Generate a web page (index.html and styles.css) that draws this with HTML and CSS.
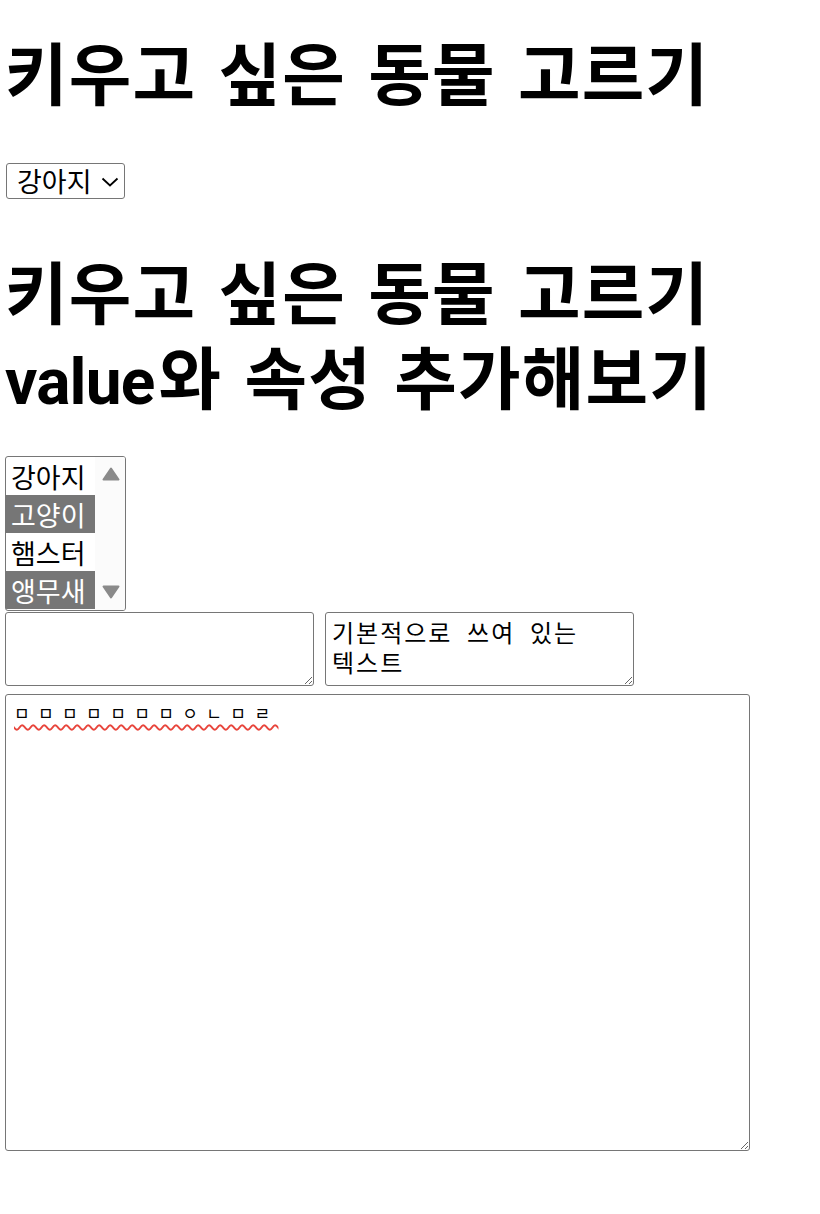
FILE: index.html
```html
<!DOCTYPE html>
<html lang="ko">
<head>
<meta charset="utf-8">
<title>키우고 싶은 동물 고르기</title>
<link rel="stylesheet" href="styles.css">
</head>
<body>
<h1 class="title">키우고 싶은 동물 고르기</h1>
<span class="pickwrap">
  <select class="pick" name="animal">
    <option>강아지</option>
    <option>고양이</option>
    <option>햄스터</option>
    <option>앵무새</option>
  </select>
  <svg class="chev" width="18" height="10" viewBox="0 0 18 10" aria-hidden="true"><path d="M1.5 1.5 L9 8.5 L16.5 1.5" fill="none" stroke="#000" stroke-width="1.8"/></svg>
</span>
<h1 class="title title-2">키우고 싶은 동물 고르기 <span class="latin">value</span>와 속성 추가해보기</h1>
<span class="listwrap">
  <select class="list" name="animals" multiple size="4">
    <option value="dog">강아지</option>
    <option value="cat" selected>고양이</option>
    <option value="hamster">햄스터</option>
    <option value="parrot" selected>앵무새</option>
    <option value="fish">금붕어</option>
  </select>
  <span class="scroll" aria-hidden="true">
    <svg class="arrow" width="18" height="14" viewBox="0 0 18 14"><path d="M9 1.5 L16.5 12.5 L1.5 12.5 Z" fill="#8a8a8a" stroke="#8a8a8a" stroke-width="2" stroke-linejoin="round"/></svg>
    <svg class="arrow" width="18" height="14" viewBox="0 0 18 14"><path d="M1.5 1.5 L16.5 1.5 L9 12.5 Z" fill="#8a8a8a" stroke="#8a8a8a" stroke-width="2" stroke-linejoin="round"/></svg>
  </span>
</span>
<div class="row">
  <textarea class="note"></textarea>
  <textarea class="note">기본적으로 쓰여 있는 텍스트</textarea>
</div>
<textarea class="memo">ㅁㅁㅁㅁㅁㅁㅁㅇㄴㅁㄹ</textarea>
</body>
</html>
```

FILE: styles.css
```css
html, body {
  background: #fff;
}
body {
  margin: 0;
  padding: 28px 6px 40px 5px;
  font-family: "Noto Sans CJK KR", "Noto Sans", sans-serif;
  color: #000;
}
.title {
  margin: 0;
  font-size: 68px;
  font-weight: 700;
  line-height: 85px;
  letter-spacing: 1.2px;
  word-spacing: 2px;
  padding-left: 0;
}
.title + .pickwrap {
  margin-top: 50px;
}
.latin {
  font-family: Roboto, "Noto Sans CJK KR", sans-serif;
  font-size: 64px;
  line-height: 1;
  letter-spacing: -0.8px;
  margin-right: 4px;
}
.pickwrap {
  position: relative;
  display: block;
  width: 119px;
  margin: 48px 0 48px 1px;
}
.pick {
  display: block;
  appearance: none;
  -webkit-appearance: none;
  box-sizing: border-box;
  width: 119px;
  height: 36px;
  margin: 0;
  padding: 0 0 0 10px;
  border: 1px solid #767676;
  border-radius: 3px;
  background: #fff;
  color: #000;
  font-family: "Noto Sans CJK KR", sans-serif;
  font-size: 27px;
  line-height: 34px;
}
.chev {
  position: absolute;
  left: 95px;
  top: 14px;
  pointer-events: none;
}
.listwrap {
  position: relative;
  display: block;
  width: 121px;
  margin-top: 39px;
}
.list {
  display: block;
  box-sizing: border-box;
  width: 121px;
  height: 155px;
  margin: 0;
  padding: 0;
  border: 1px solid #767676;
  border-radius: 3px;
  background: #fff;
  font-family: "Noto Sans CJK KR", sans-serif;
  font-size: 27px;
  scrollbar-width: none;
  overflow: hidden;
}
.list option {
  height: 38px;
  line-height: 38px;
  padding: 0 5px;
  min-height: 0;
  color: #000;
}
.list option:checked {
  background: #767676 linear-gradient(#767676, #767676);
  color: #fff;
}
.scroll {
  position: absolute;
  top: 1px;
  right: 1px;
  bottom: 1px;
  width: 30px;
  background: #fbfbfb;
  border-radius: 0 2px 2px 0;
  display: flex;
  flex-direction: column;
  justify-content: space-between;
  align-items: center;
  padding: 10px 0 11px 2px;
  box-sizing: border-box;
  pointer-events: none;
}
.arrow {
  display: block;
}
.row {
  display: flex;
  gap: 11px;
  margin-top: 1px;
}
.note {
  box-sizing: border-box;
  width: 309px;
  height: 74px;
  margin: 0;
  padding: 4px 6px;
  border: 1px solid #767676;
  border-radius: 3px;
  font-family: "Noto Sans CJK KR", sans-serif;
  font-size: 24px;
  font-weight: 400;
  letter-spacing: 2px;
  word-spacing: 6px;
  line-height: 30px;
  word-break: keep-all;
  color: #000;
  resize: both;
}
.memo {
  display: block;
  box-sizing: border-box;
  width: 745px;
  height: 457px;
  margin: 8px 0 0;
  padding: 7px 8px;
  border: 1px solid #767676;
  border-radius: 3px;
  font-family: "Noto Sans CJK KR", sans-serif;
  font-size: 17px;
  letter-spacing: 8.4px;
  line-height: 22px;
  color: #000;
  text-decoration: underline wavy #e8453c;
  text-decoration-thickness: 1.5px;
  text-underline-offset: 4px;
}
```
